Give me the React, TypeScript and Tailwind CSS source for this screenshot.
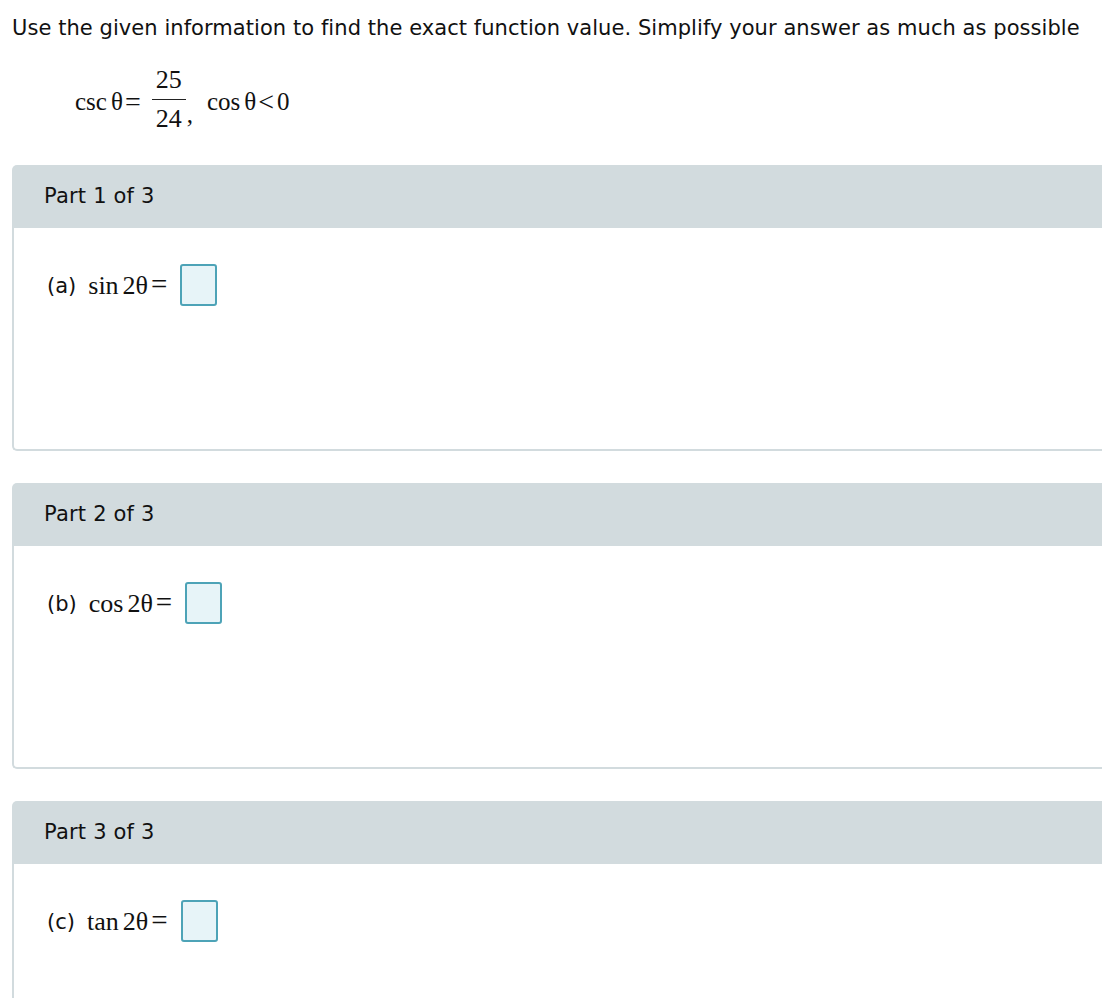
import React from "react";

const sans = { fontFamily: "Verdana, 'DejaVu Sans', sans-serif" };
const serif = { fontFamily: "'Liberation Serif', 'Times New Roman', serif" };

const parts = [
    { label: "Part 1 of 3", tag: "(a)", fn: "sin" },
    { label: "Part 2 of 3", tag: "(b)", fn: "cos" },
    { label: "Part 3 of 3", tag: "(c)", fn: "tan" },
];

function AnswerBox() {
    return <span className="inline-block w-[37px] h-[42px] rounded-[3px] border-2 border-[#4da3b7] bg-[#e7f4f8]" />;
}

export default function App() {
    return (
        <div className="w-full min-h-[998px] overflow-hidden bg-white text-[#111]" style={sans}>
            <div className="pl-[12px] pt-[14px] text-[21px] leading-[28px] tracking-[0.06px] whitespace-nowrap">
                Use the given information to find the exact function value. Simplify your answer as much as possible
            </div>

            <div className="flex items-center pl-[75px] mt-[26px] text-[25px] h-[68px]" style={serif}>
                <span>csc</span>
                <span className="ml-[4px]">θ</span>
                <span className="ml-[2px] text-[28px]">=</span>
                <span className="flex flex-col items-center ml-[11px] text-[26px] leading-[22px] mt-[-5px]">
                    <span className="px-[3px]">25</span>
                    <span className="h-[1.5px] w-[34px] bg-[#222] my-[8px]" />
                    <span className="px-[3px]">24</span>
                </span>
                <span className="self-end mb-[3px] ml-[1px]">,</span>
                <span className="ml-[14px]">cos</span>
                <span className="ml-[4px]">θ</span>
                <span className="ml-[2px] text-[28px]">&lt;</span>
                <span className="ml-[3px]">0</span>
            </div>

            <div className="flex flex-col gap-[32px] mt-[29px] pl-[12px]">
                {parts.map((p) => (
                    <div key={p.label} className="w-[1120px] flex flex-col">
                        <div className="h-[63px] bg-[#d2dbde] rounded-tl-[5px] flex items-center pl-[32px] text-[21px] tracking-[0.2px]">
                            {p.label}
                        </div>
                        <div className="h-[223px] border-l-2 border-b-2 border-[#d2dbde] rounded-bl-[5px] pt-[35px] pl-[33px]">
                            <div className="flex items-center">
                                <span className="text-[21px] mt-[4px]">{p.tag}</span>
                                <span className="ml-[12px] text-[26px] flex items-baseline" style={serif}>
                                    <span>{p.fn}</span>
                                    <span className="ml-[4px]">2θ</span>
                                    <span className="ml-[3px] text-[29px]">=</span>
                                </span>
                                <span className="ml-[13px] flex">
                                    <AnswerBox />
                                </span>
                            </div>
                        </div>
                    </div>
                ))}
            </div>
        </div>
    );
}
